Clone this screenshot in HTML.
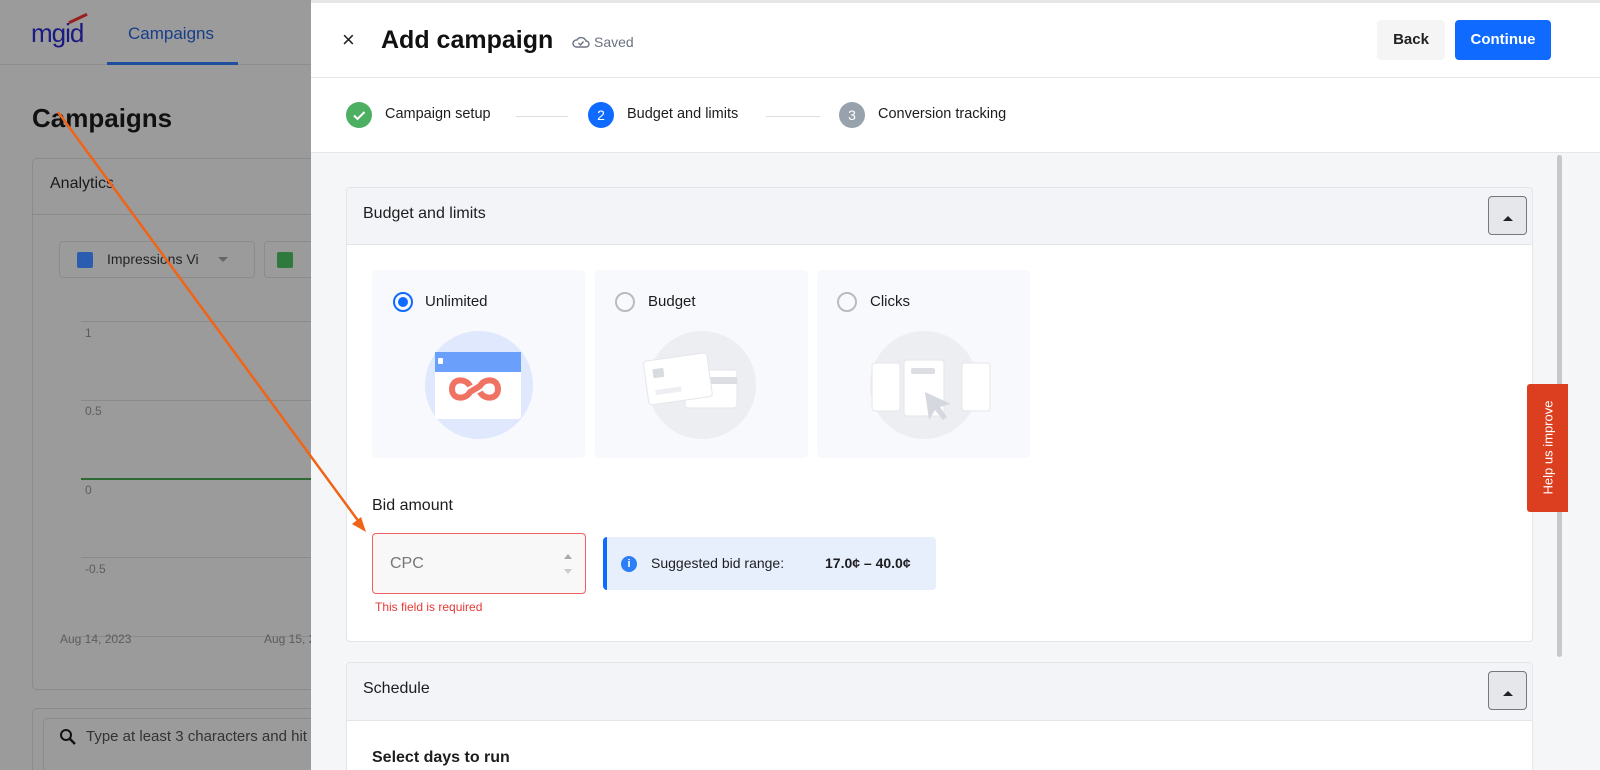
<!DOCTYPE html>
<html><head><meta charset="utf-8"><style>
*{box-sizing:border-box;margin:0;padding:0}
body{width:1600px;height:770px;overflow:hidden;font-family:"Liberation Sans",Arial,sans-serif;background:#9a9a9a;position:relative;color:#1d1d1f}
.a{position:absolute;white-space:nowrap}
.lt{color:#5c5c5c;font-size:12px}
</style></head><body>
<div class="a" style="left:0;top:0;width:311px;height:770px;background:#9b9b9b;overflow:hidden">
 <div class="a" style="left:0;top:64px;width:311px;height:1px;background:#8d8d8d"></div>
 <div class="a" style="left:31px;top:18px;font-size:26px;color:#1a1a80;letter-spacing:-1px">mgid</div>
 <div class="a" style="left:68px;top:17px;width:20px;height:3px;background:#9a2020;transform:rotate(-25deg)"></div>
 <div class="a" style="left:128px;top:24px;font-size:17px;color:#173e8a">Campaigns</div>
 <div class="a" style="left:107px;top:62px;width:131px;height:3px;background:#1f4e9e"></div>
 <div class="a" style="left:32px;top:103px;font-size:26px;font-weight:bold;color:#111">Campaigns</div>
 <div class="a" style="left:32px;top:158px;width:300px;height:532px;border:1px solid #8b8b8b;border-radius:5px"></div>
 <div class="a" style="left:33px;top:214px;width:280px;height:1px;background:#8b8b8b"></div>
 <div class="a" style="left:50px;top:175px;font-size:16px;color:#1a1a1a">Analytics</div>
 <div class="a" style="left:59px;top:241px;width:196px;height:37px;border:1px solid #8b8b8b;border-radius:4px"></div>
 <div class="a" style="left:77px;top:252px;width:16px;height:16px;background:#2a5db0;border-radius:2px"></div>
 <div class="a" style="left:107px;top:251px;font-size:14px;color:#222">Impressions Vi</div>
 <div class="a" style="left:218px;top:257px;border:5px solid transparent;border-top:5px solid #666"></div>
 <div class="a" style="left:264px;top:241px;width:60px;height:37px;border:1px solid #8b8b8b;border-radius:4px"></div>
 <div class="a" style="left:277px;top:252px;width:16px;height:16px;background:#2e7a3c;border-radius:2px"></div>
 <div class="a" style="left:81px;top:321px;width:230px;height:1px;background:#8a8a8a"></div>
 <div class="a" style="left:81px;top:400px;width:230px;height:1px;background:#8a8a8a"></div>
 <div class="a" style="left:81px;top:478px;width:230px;height:2px;background:#2d6a33"></div>
 <div class="a" style="left:81px;top:557px;width:230px;height:1px;background:#8a8a8a"></div>
 <div class="a" style="left:81px;top:636px;width:230px;height:1px;background:#8a8a8a"></div>
 <div class="a lt" style="left:85px;top:326px">1</div>
 <div class="a lt" style="left:85px;top:404px">0.5</div>
 <div class="a lt" style="left:85px;top:483px">0</div>
 <div class="a lt" style="left:85px;top:562px">-0.5</div>
 <div class="a lt" style="left:60px;top:632px">Aug 14, 2023</div>
 <div class="a lt" style="left:264px;top:632px">Aug 15, 2</div>
 <div class="a" style="left:32px;top:708px;width:300px;height:80px;border:1px solid #8b8b8b;border-radius:5px"></div>
 <div class="a" style="left:43px;top:718px;width:290px;height:60px;border:1px solid #8b8b8b;border-radius:4px"></div>
 <svg class="a" style="left:59px;top:728px" width="18" height="18"><circle cx="7" cy="7" r="5" stroke="#111" stroke-width="2" fill="none"/><path d="M11 11l5 5" stroke="#111" stroke-width="2.4"/></svg>
 <div class="a" style="left:86px;top:728px;font-size:15px;color:#333">Type at least 3 characters and hit</div>
</div>
<div class="a" style="left:311px;top:0;width:1289px;height:770px;background:#fff;overflow:hidden">
 <div class="a" style="left:0;top:0;width:1289px;height:3px;background:#e6e6e6"></div>
 <div class="a" style="left:0;top:77px;width:1289px;height:1px;background:#e6e7ea"></div>
 <div class="a" style="left:31px;top:27px;font-size:22px;color:#222">×</div>
 <div class="a" style="left:70px;top:26px;font-size:25px;font-weight:bold;color:#111">Add campaign</div>
 <svg class="a" style="left:261px;top:35px" width="18" height="14"><path d="M4 12h10a3 3 0 0 0 0-6a5 5 0 0 0-9-1a3.5 3.5 0 0 0-1 7z" fill="none" stroke="#6b7280" stroke-width="1.4"/><path d="M6.5 8l2 2 3-3.5" fill="none" stroke="#6b7280" stroke-width="1.4"/></svg>
 <div class="a" style="left:283px;top:34px;font-size:14px;color:#6b7280">Saved</div>
 <div class="a" style="left:1066px;top:20px;width:68px;height:40px;background:#f5f5f5;border-radius:4px;font-size:15px;font-weight:bold;text-align:center;line-height:40px;color:#222">Back</div>
 <div class="a" style="left:1144px;top:20px;width:96px;height:40px;background:#0f6bff;border-radius:4px;font-size:15px;font-weight:bold;text-align:center;line-height:40px;color:#fff">Continue</div>
 <div class="a" style="left:35px;top:102px;width:26px;height:26px;border-radius:50%;background:#4caf62"></div>
 <svg class="a" style="left:35px;top:102px" width="26" height="26"><path d="M8 13.5l3.5 3.5 7-7" stroke="#fff" stroke-width="2" fill="none"/></svg>
 <div class="a" style="left:74px;top:106px;font-size:14.5px">Campaign setup</div>
 <div class="a" style="left:205px;top:116px;width:52px;height:1px;background:#ddd"></div>
 <div class="a" style="left:277px;top:102px;width:26px;height:26px;border-radius:50%;background:#0f6bff;color:#fff;font-size:14px;text-align:center;line-height:26px">2</div>
 <div class="a" style="left:316px;top:106px;font-size:14.5px">Budget and limits</div>
 <div class="a" style="left:455px;top:116px;width:54px;height:1px;background:#ddd"></div>
 <div class="a" style="left:528px;top:102px;width:26px;height:26px;border-radius:50%;background:#98a2ad;color:#fff;font-size:14px;text-align:center;line-height:26px">3</div>
 <div class="a" style="left:567px;top:106px;font-size:14.5px">Conversion tracking</div>
 <div class="a" style="left:0;top:152px;width:1289px;height:618px;background:#f5f6f8;border-top:1px solid #e6e7ea"></div>
 <div class="a" style="left:1246px;top:155px;width:5px;height:502px;background:#c8c8c8;border-radius:3px"></div>
 <div class="a" style="left:35px;top:187px;width:1187px;height:455px;background:#fff;border:1px solid #e3e5e9;border-radius:4px;overflow:hidden">
  <div style="height:57px;background:#f3f4f7;border-bottom:1px solid #e3e5e9;padding:17px 16px;font-size:16px">Budget and limits</div>
  <div class="a" style="left:1141px;top:8px;width:39px;height:39px;border:1px solid #777;border-radius:4px;background:#e6e7ea"><div class="a" style="left:14px;top:14px;border:5px solid transparent;border-bottom:5px solid #222"></div></div>
 </div>
 <div class="a" style="left:61px;top:270px;width:213px;height:188px;background:#f8f9fc;border-radius:4px"></div>
 <div class="a" style="left:284px;top:270px;width:213px;height:188px;background:#f8f9fc;border-radius:4px"></div>
 <div class="a" style="left:506px;top:270px;width:213px;height:188px;background:#f8f9fc;border-radius:4px"></div>
 <div class="a" style="left:82px;top:292px;width:20px;height:20px;border-radius:50%;border:2px solid #0f6bff"></div>
 <div class="a" style="left:87px;top:297px;width:10px;height:10px;border-radius:50%;background:#0f6bff"></div>
 <div class="a" style="left:114px;top:293px;font-size:15px">Unlimited</div>
 <div class="a" style="left:304px;top:292px;width:20px;height:20px;border-radius:50%;border:2px solid #bbb"></div>
 <div class="a" style="left:337px;top:293px;font-size:15px">Budget</div>
 <div class="a" style="left:526px;top:292px;width:20px;height:20px;border-radius:50%;border:2px solid #bbb"></div>
 <div class="a" style="left:559px;top:293px;font-size:15px">Clicks</div>
 <svg class="a" style="left:61px;top:330px" width="660" height="112">
  <circle cx="107" cy="55" r="54" fill="#dfe8fc"/>
  <rect x="63" y="22" width="86" height="67" rx="3" fill="#fff"/>
  <rect x="63" y="22" width="86" height="20" fill="#6aa0fc"/>
  <rect x="66" y="28" width="5" height="6" rx="1" fill="#fff"/>
  <path d="M98 56c-4-8-18-8-18 3s14 11 18 3l10-6c4-8 18-8 18 3s-14 11-18 3" fill="none" stroke="#f07263" stroke-width="6"/>
  <circle cx="330" cy="55" r="54" fill="#edeef2"/>
  <rect x="313" y="40" width="52" height="38" rx="3" fill="#fff" stroke="#e4e6ea"/>
  <rect x="313" y="47" width="52" height="7" fill="#dcdee3"/>
  <g transform="rotate(-8 305 50)"><rect x="274" y="27" width="64" height="44" rx="3" fill="#fff" stroke="#e4e6ea"/><rect x="282" y="36" width="11" height="9" rx="1" fill="#d8dbe0"/><rect x="282" y="57" width="26" height="5" fill="#eceef1"/></g>
  <circle cx="552" cy="55" r="54" fill="#edeef2"/>
  <rect x="500" y="33" width="28" height="48" rx="3" fill="#fff" stroke="#e4e6ea"/>
  <rect x="590" y="33" width="28" height="48" rx="3" fill="#fff" stroke="#e4e6ea"/>
  <rect x="532" y="30" width="40" height="56" rx="3" fill="#fff" stroke="#e4e6ea"/>
  <rect x="539" y="38" width="24" height="6" rx="2" fill="#dcdee3"/>
  <path d="M553 62l4 28 6-10 8 10 4-3-7-10 11-3z" fill="#d5d8de"/>
 </svg>
 <div class="a" style="left:61px;top:497px;font-size:16px">Bid amount</div>
 <div class="a" style="left:61px;top:533px;width:214px;height:61px;border:1px solid #f06060;border-radius:4px;background:#f8f8f9"></div>
 <div class="a" style="left:79px;top:555px;font-size:16px;color:#777">CPC</div>
 <div class="a" style="left:253px;top:550px;border:4px solid transparent;border-bottom:5px solid #aaa"></div>
 <div class="a" style="left:253px;top:569px;border:4px solid transparent;border-top:5px solid #ccc"></div>
 <div class="a" style="left:64px;top:600px;font-size:12px;color:#e53935">This field is required</div>
 <div class="a" style="left:292px;top:537px;width:333px;height:53px;background:#e7effd;border-left:4px solid #0f6bff;border-radius:4px"></div>
 <div class="a" style="left:310px;top:556px;width:16px;height:16px;border-radius:50%;background:#2c7ef8;color:#fff;font-size:11px;font-weight:bold;text-align:center;line-height:16px">i</div>
 <div class="a" style="left:340px;top:555px;font-size:14px">Suggested bid range:</div>
 <div class="a" style="left:514px;top:555px;font-size:14px;font-weight:bold">17.0¢ – 40.0¢</div>
 <div class="a" style="left:35px;top:662px;width:1187px;height:130px;background:#fff;border:1px solid #e3e5e9;border-radius:4px;overflow:hidden">
  <div style="height:58px;background:#f3f4f7;border-bottom:1px solid #e3e5e9;padding:17px 16px;font-size:16px">Schedule</div>
  <div class="a" style="left:1141px;top:8px;width:39px;height:39px;border:1px solid #777;border-radius:4px;background:#e6e7ea"><div class="a" style="left:14px;top:14px;border:5px solid transparent;border-bottom:5px solid #222"></div></div>
  <div class="a" style="left:25px;top:86px;font-size:16px;font-weight:bold">Select days to run</div>
 </div>
 <div class="a" style="left:1216px;top:384px;width:41px;height:128px;background:#dc3f1f;border-radius:3px 0 0 3px"></div>
 <div class="a" style="left:1187px;top:440px;width:100px;transform:rotate(-90deg);color:#fff;font-size:13px;text-align:center">Help us improve</div>
</div>
<svg class="a" style="left:0;top:0" width="400" height="560"><path d="M58 112L362 526" stroke="#f06418" stroke-width="2.5"/><path d="M366 532l-14-8 9-7z" fill="#f06418"/></svg>
</body></html>
